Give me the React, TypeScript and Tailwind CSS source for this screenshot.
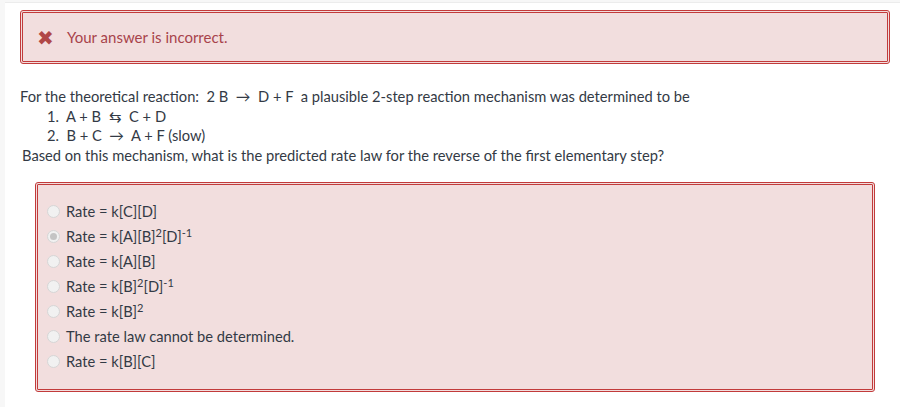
const options: { label: React.ReactNode; checked?: boolean }[] = [
  { label: <>Rate = k[C][D]</> },
  { label: <>Rate = k[A][B]<sup className="text-[11px]">2</sup>[D]<sup className="text-[11px]">-1</sup></>, checked: true },
  { label: <>Rate = k[A][B]</> },
  { label: <>Rate = k[B]<sup className="text-[11px]">2</sup>[D]<sup className="text-[11px]">-1</sup></> },
  { label: <>Rate = k[B]<sup className="text-[11px]">2</sup></> },
  { label: <>The rate law cannot be determined.</> },
  { label: <>Rate = k[B][C]</> },
];

const Radio = ({ checked }: { checked?: boolean }) => (
  <span className="flex h-[13px] w-[13px] shrink-0 items-center justify-center rounded-full border border-[#d6d6d6] bg-[#f1f1f1]">
    {checked && <span className="h-[7px] w-[7px] rounded-full bg-[#c4c4c4]" />}
  </span>
);

export default function App() {
  return (
    <div className="h-[407px] w-[900px] bg-[#f7f7f7] pl-[5px] pt-[2px] font-['Lato','Open_Sans',sans-serif] text-[14.7px] text-[#333a45]">
      <div className="h-full border-t border-[#ececec] bg-white pl-[15px] pr-[10px] pt-[7px]">
        <div className="flex h-[54px] items-center rounded-[3px] border-[3px] border-double border-[#c23b3b] bg-[#f2dede] pl-[14px] text-[15px] text-[#a8434b]">
          <span className="w-[30px] text-[20px] leading-none text-[#b04747]">✖</span>
          <span>Your answer is incorrect.</span>
        </div>

        <div className="mt-[23px] leading-[19.5px]">
          <p>
            For the theoretical reaction:&nbsp; 2 B &nbsp;→&nbsp; D + F &nbsp;a plausible 2-step reaction mechanism was determined to be
          </p>
          <p className="pl-[27px]">1.&nbsp; A + B &nbsp;⇆&nbsp; C + D</p>
          <p className="pl-[27px]">2.&nbsp; B + C &nbsp;→&nbsp; A + F (slow)</p>
          <p className="pl-[2px]">
            Based on this mechanism, what is the predicted rate law for the reverse of the first elementary step?
          </p>
        </div>

        <div className="ml-[15px] mr-[15px] mt-[17px] rounded-[3px] border-[3px] border-double border-[#c23b3b] bg-[#f2dede] pb-[15px] pl-[8px] pt-[14px]">
          {options.map((o, i) => (
            <div key={i} className="flex h-[25px] items-center gap-[6px] pl-[1px]">
              <Radio checked={o.checked} />
              <span className="leading-none">{o.label}</span>
            </div>
          ))}
        </div>
      </div>
    </div>
  );
}
